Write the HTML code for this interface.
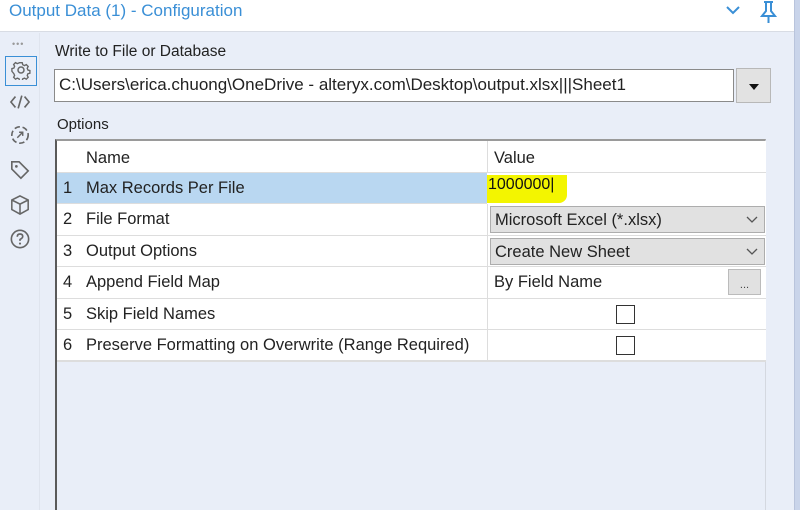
<!DOCTYPE html>
<html><head><style>
*{margin:0;padding:0;box-sizing:border-box}
body{width:800px;height:510px;overflow:hidden;background:#e9eef8;font-family:"Liberation Sans",sans-serif;position:relative;color:#222}
.hdr{position:absolute;left:0;top:0;width:794px;height:32px;background:#fff;border-bottom:1px solid #d8dce4}
.hdr .t{position:absolute;left:9px;top:1px;font-size:17px;color:#3a8fd6}
.rline{position:absolute;left:794px;top:0;width:6px;height:510px;background:#c9d4ea;border-left:1px solid #b9c4dc}
.side{position:absolute;left:0;top:33px;width:40px;height:477px;border-right:1px solid #dfe4ee}
.ic{position:absolute;left:8px;width:20px;height:20px}
.lbl{position:absolute;color:#222}
.inp{position:absolute;left:54px;top:69px;width:680px;height:33px;background:#fff;border:1px solid #8a8a8a;font-size:17px;padding:5px 0 0 4px;white-space:nowrap}
.dd{position:absolute;left:736px;top:68px;width:35px;height:35px;background:#e2e2e2;border:1px solid #b8b8b8}
.grid{position:absolute;left:55px;top:139px;width:711px;height:371px;border-left:2px solid #5a5a5a;border-top:2px solid #9a9a9a;border-right:1px solid #d4d8e0}
.row{position:absolute;left:0;width:709px;height:31px;background:#fff;border-bottom:1px solid #ddd;font-size:16.5px}
.row .n{position:absolute;left:6px;top:6px}
.row .nm{position:absolute;left:29px;top:6px;white-space:nowrap}
.row .v{position:absolute;left:430px;top:0;width:279px;height:31px;border-left:1px solid #ddd}
.sel{position:absolute;left:2px;top:2px;width:275px;height:27px;background:#e1e1e1;border:1px solid #adadad;padding:4px 0 0 4px;font-size:16.5px}
.cb{position:absolute;left:128px;top:6px;width:19px;height:19px;border:1.5px solid #333;background:#fff}
</style></head><body>
<div class="hdr"><div class="t">Output Data (1) - Configuration</div>
<svg style="position:absolute;left:725px;top:4px" width="16" height="12"><path d="M2 3 L8 9 L14 3" stroke="#3a8fd6" stroke-width="2" fill="none"/></svg>
<svg style="position:absolute;left:757px;top:0" width="22" height="24"><path d="M7 2 H16 M9 2 V11 L5 16 H18 L14 11 V2 M11.5 16 V23" stroke="#3a8fd6" stroke-width="2" fill="none"/></svg>
</div>
<div class="rline"></div>
<div class="side">
<div style="position:absolute;left:12px;top:6px;font-size:9px;color:#999;letter-spacing:1px">•••</div>
<div style="position:absolute;left:5px;top:23px;width:32px;height:30px;border:1.5px solid #3a8fd6"></div>
<svg class="ic" style="top:27px;left:11px" viewBox="0 0 20 20"><circle cx="10" cy="10" r="3" stroke="#666" stroke-width="1.5" fill="none"/><path d="M8.5 2h3l.5 2.2 2 1 2-1.1 2.1 2.1-1.1 2 .8 2 2.2.5v3l-2.2.5-.8 2 1.1 2-2.1 2.1-2-1.1-2 .8-.5 2.2h-3l-.5-2.2-2-.8-2 1.1-2.1-2.1 1.1-2-.8-2L0 11.5v-3l2.2-.5.8-2-1.1-2L4 1.9l2 1.1 2-.8z" transform="scale(.9) translate(1 1)" stroke="#666" stroke-width="1.5" fill="none"/></svg>
<svg class="ic" style="top:59px;left:10px" viewBox="0 0 22 20"><path d="M6 4 L1 10 L6 16 M16 4 L21 10 L16 16 M13 3 L9 17" stroke="#666" stroke-width="1.8" fill="none"/></svg>
<svg class="ic" style="top:92px;left:10px" viewBox="0 0 22 22"><circle cx="11" cy="11" r="9" stroke="#666" stroke-width="1.8" fill="none" stroke-dasharray="6 3"/><path d="M8 14 L14 8 M10 8 H14 V12" stroke="#666" stroke-width="1.6" fill="none"/></svg>
<svg class="ic" style="top:127px;left:10px" viewBox="0 0 22 22"><path d="M2 2 H10 L20 12 L12 20 L2 10 Z" stroke="#666" stroke-width="1.8" fill="none"/><circle cx="7" cy="7" r="1.5" fill="#666"/></svg>
<svg class="ic" style="top:162px;left:10px" viewBox="0 0 22 22"><path d="M11 1 L20 5.5 V16 L11 21 L2 16 V5.5 Z M2 5.5 L11 10 L20 5.5 M11 10 V21" stroke="#666" stroke-width="1.7" fill="none"/></svg>
<svg class="ic" style="top:196px;left:10px" viewBox="0 0 22 22"><circle cx="11" cy="11" r="9.5" stroke="#666" stroke-width="1.8" fill="none"/><path d="M8 8.5 Q8 5.5 11 5.5 Q14 5.5 14 8.3 Q14 10 11 11.5 V13" stroke="#666" stroke-width="1.8" fill="none"/><circle cx="11" cy="16" r="1.2" fill="#666"/></svg>
</div>
<div class="lbl" style="left:55px;top:43px;font-size:15.5px">Write to File or Database</div>
<div class="inp">C:\Users\erica.chuong\OneDrive - alteryx.com\Desktop\output.xlsx|||Sheet1</div>
<div class="dd"><svg style="position:absolute;left:12px;top:15px" width="10" height="6"><path d="M0 0 H10 L5 6Z" fill="#111"/></svg></div>
<div class="lbl" style="left:57px;top:116px;font-size:15px">Options</div>
<div class="grid">
<div class="row" style="top:0;height:32px"><span class="nm" style="top:8px">Name</span><div class="v" style="height:32px"><span style="position:absolute;left:6px;top:8px">Value</span></div></div>
<div class="row" style="top:32px;background:#b9d7f1"><span class="n">1</span><span class="nm">Max Records Per File</span><div class="v" style="background:#fff;border:none"><div style="position:absolute;left:0;top:2px;width:80px;height:28px;background:#f3f500;border-radius:0 0 8px 0"></div><span style="position:absolute;left:1px;top:3px;font-size:16px;color:#111">1000000|</span></div></div>
<div class="row" style="top:63px;height:32px"><span class="n">2</span><span class="nm">File Format</span><div class="v"><div class="sel">Microsoft Excel (*.xlsx)<svg style="position:absolute;right:6px;top:9px" width="12" height="8"><path d="M1 1 L6 6 L11 1" stroke="#555" stroke-width="1.3" fill="none"/></svg></div></div></div>
<div class="row" style="top:95px"><span class="n">3</span><span class="nm">Output Options</span><div class="v"><div class="sel">Create New Sheet<svg style="position:absolute;right:6px;top:9px" width="12" height="8"><path d="M1 1 L6 6 L11 1" stroke="#555" stroke-width="1.3" fill="none"/></svg></div></div></div>
<div class="row" style="top:126px;height:32px"><span class="n">4</span><span class="nm">Append Field Map</span><div class="v"><span style="position:absolute;left:6px;top:6px">By Field Name</span><div style="position:absolute;left:240px;top:2px;width:33px;height:26px;background:#e1e1e1;border:1px solid #bbb;font-size:11px;text-align:center;padding-top:9px;color:#444">...</div></div></div>
<div class="row" style="top:158px"><span class="n">5</span><span class="nm">Skip Field Names</span><div class="v"><div class="cb"></div></div></div>
<div class="row" style="top:189px;height:32px;border-bottom:2px solid #ddd"><span class="n">6</span><span class="nm">Preserve Formatting on Overwrite (Range Required)</span><div class="v"><div class="cb"></div></div></div>
</div>
</body></html>
